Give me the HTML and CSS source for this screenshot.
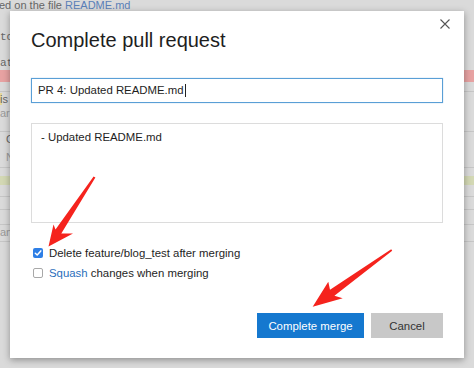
FILE: index.html
```html
<!DOCTYPE html>
<html>
<head>
<meta charset="utf-8">
<link rel="stylesheet" href="styles.css">
</head>
<body>
<div class="page">
  <div class="bg">
    <div class="bgrow top"><span class="cut">ed on the file <span class="bglink">README.md</span></span></div>
    <div class="bgrow h18"></div>
    <div class="bgrow h14 mono">tc</div>
    <div class="bgrow h12 dotrow"><span class="dot"></span></div>
    <div class="bgrow h14 mono">at</div>
    <div class="bgrow red"></div>
    <div class="bgrow h10 line"></div>
    <div class="bgrow h14 small"><span class="hl">i</span>s</div>
    <div class="bgrow h14 small grey">ar</div>
    <div class="bgrow h12 line"></div>
    <div class="bgrow h18 small ind">C</div>
    <div class="bgrow h18 small ind grey line">N</div>
    <div class="bgrow h8"></div>
    <div class="bgrow green"></div>
    <div class="bgrow h12 line"></div>
    <div class="bgrow h13 line"></div>
    <div class="bgrow h15 line"></div>
    <div class="bgrow h17 small grey line">an</div>
  </div>

  <div class="modal">
    <button class="close" aria-label="Close">
      <svg width="10" height="10" viewBox="0 0 10 10"><path d="M0.5 0.5 L9.5 9.5 M9.5 0.5 L0.5 9.5" stroke="#555" stroke-width="1.1" fill="none"/></svg>
    </button>
    <h1 class="title">Complete pull request</h1>
    <div class="input">PR 4: Updated README.md<span class="caret"></span></div>
    <div class="textarea">- Updated README.md</div>
    <div class="options">
      <label class="opt">
        <span class="cb checked">
          <svg width="10" height="10" viewBox="0 0 10 10"><path d="M2.3 5.2 L4.2 7 L7.8 2.9" stroke="#fff" stroke-width="1.5" fill="none" stroke-linecap="round" stroke-linejoin="round"/></svg>
        </span>
        <span>Delete feature/blog_test after merging</span>
      </label>
      <label class="opt">
        <span class="cb"></span>
        <span><span class="link">Squash</span> changes when merging</span>
      </label>
    </div>
    <div class="actions">
      <button class="btn primary">Complete merge</button>
      <button class="btn secondary">Cancel</button>
    </div>
  </div>

  <svg class="arrows" width="474" height="368" viewBox="0 0 474 368">
    <polygon fill="#f5231d" points="93.6,176.5 55.5,229.6 53.5,224.5 48.5,246.5 73,233.5 61.3,233.4 95.4,177.6"/>
    <polygon fill="#f5231d" points="391.2,249.3 330,289.7 328.3,281.7 312.7,306.7 342.7,298.3 334.4,295.7 392.2,250.7"/>
  </svg>
</div>
</body>
</html>
```

FILE: styles.css
```css
* { box-sizing: border-box; }
html, body { margin: 0; padding: 0; }
body {
  width: 474px;
  height: 368px;
  overflow: hidden;
  font-family: "Liberation Sans", Arial, sans-serif;
  background: #dadada;
}
.page {
  position: relative;
  width: 474px;
  height: 368px;
  overflow: hidden;
}
.bg {
  display: flex;
  flex-direction: column;
  color: #555;
}
.bgrow {
  width: 474px;
  font-size: 11px;
  line-height: 12px;
  white-space: nowrap;
  overflow: hidden;
  position: relative;
}
.bgrow.top { height: 12px; line-height: 10px; font-size: 11px; color: #666; }
.cut { display: inline-block; margin-left: -1px; }
.bglink { color: #5b80b8; }
.h8 { height: 8px; }
.h10 { height: 10px; }
.h12 { height: 12px; }
.h13 { height: 13px; }
.h14 { height: 14px; }
.h15 { height: 15px; }
.h17 { height: 17px; }
.h18 { height: 18px; }
.mono { font-family: "Liberation Mono", monospace; color: #666; line-height: 14px; }
.small { font-size: 11px; line-height: 14px; color: #666; }
.grey { color: #999; }
.ind { padding-left: 6px; }
.hl { background: #e4d89a; }
.line { border-bottom: 1px solid #c6c6c6; }
.red { height: 12px; background: #e7a2a2; }
.green { height: 9px; background: #d3d8b4; }
.dotrow { display: flex; justify-content: flex-end; padding-right: 3px; }
.dot { width: 2px; height: 2px; background: #555; border-radius: 1px; margin-top: -4px; }

.modal {
  position: absolute;
  left: 10px;
  top: 11px;
  width: 454px;
  height: 347px;
  background: #fff;
  box-shadow: 0 2px 7px rgba(0,0,0,0.35);
  padding: 17px 21px 20px 21px;
  display: flex;
  flex-direction: column;
  color: #222;
}
.close {
  position: absolute;
  left: 430px;
  top: 8px;
  width: 10px;
  height: 10px;
  padding: 0;
  border: 0;
  background: none;
  display: flex;
}
.title {
  margin: 0;
  font-size: 20px;
  line-height: 24px;
  font-weight: normal;
  color: #1e1e1e;
}
.input {
  margin-top: 26px;
  height: 25px;
  border: 1px solid #5a9fd6;
  box-shadow: 0 0 1px rgba(90,159,214,0.6);
  padding: 0 6px;
  font-size: 11.4px;
  line-height: 23px;
  display: flex;
  align-items: center;
  color: #1e1e1e;
}
.caret {
  display: inline-block;
  width: 1px;
  height: 13px;
  background: #222;
  margin-left: 1px;
}
.textarea {
  margin-top: 20px;
  height: 100px;
  border: 1px solid #dcdcdc;
  padding: 6px 9px;
  font-size: 11.4px;
  line-height: 14px;
  color: #1e1e1e;
}
.options {
  margin-top: 20px;
  display: flex;
  flex-direction: column;
}
.opt {
  height: 20px;
  display: flex;
  align-items: center;
  gap: 6px;
  padding-left: 2px;
  font-size: 11.4px;
  color: #1e1e1e;
}
.cb {
  width: 10px;
  height: 10px;
  border-radius: 2px;
  border: 1px solid #a8a8a8;
  background: #fff;
  display: flex;
  flex: none;
}
.cb.checked {
  border: 0;
  background: #2e7fe6;
}
.link { color: #2a6ebb; }
.actions {
  margin-top: 30px;
  display: flex;
  justify-content: flex-end;
  gap: 7px;
}
.btn {
  height: 25px;
  border: 0;
  font-family: "Liberation Sans", Arial, sans-serif;
  font-size: 11.4px;
  padding: 0;
}
.primary {
  width: 107px;
  background: #1578cf;
  color: #fff;
}
.secondary {
  width: 72px;
  background: #c8c8c8;
  color: #333;
}
.arrows {
  position: absolute;
  left: 0;
  top: 0;
  pointer-events: none;
}
```
